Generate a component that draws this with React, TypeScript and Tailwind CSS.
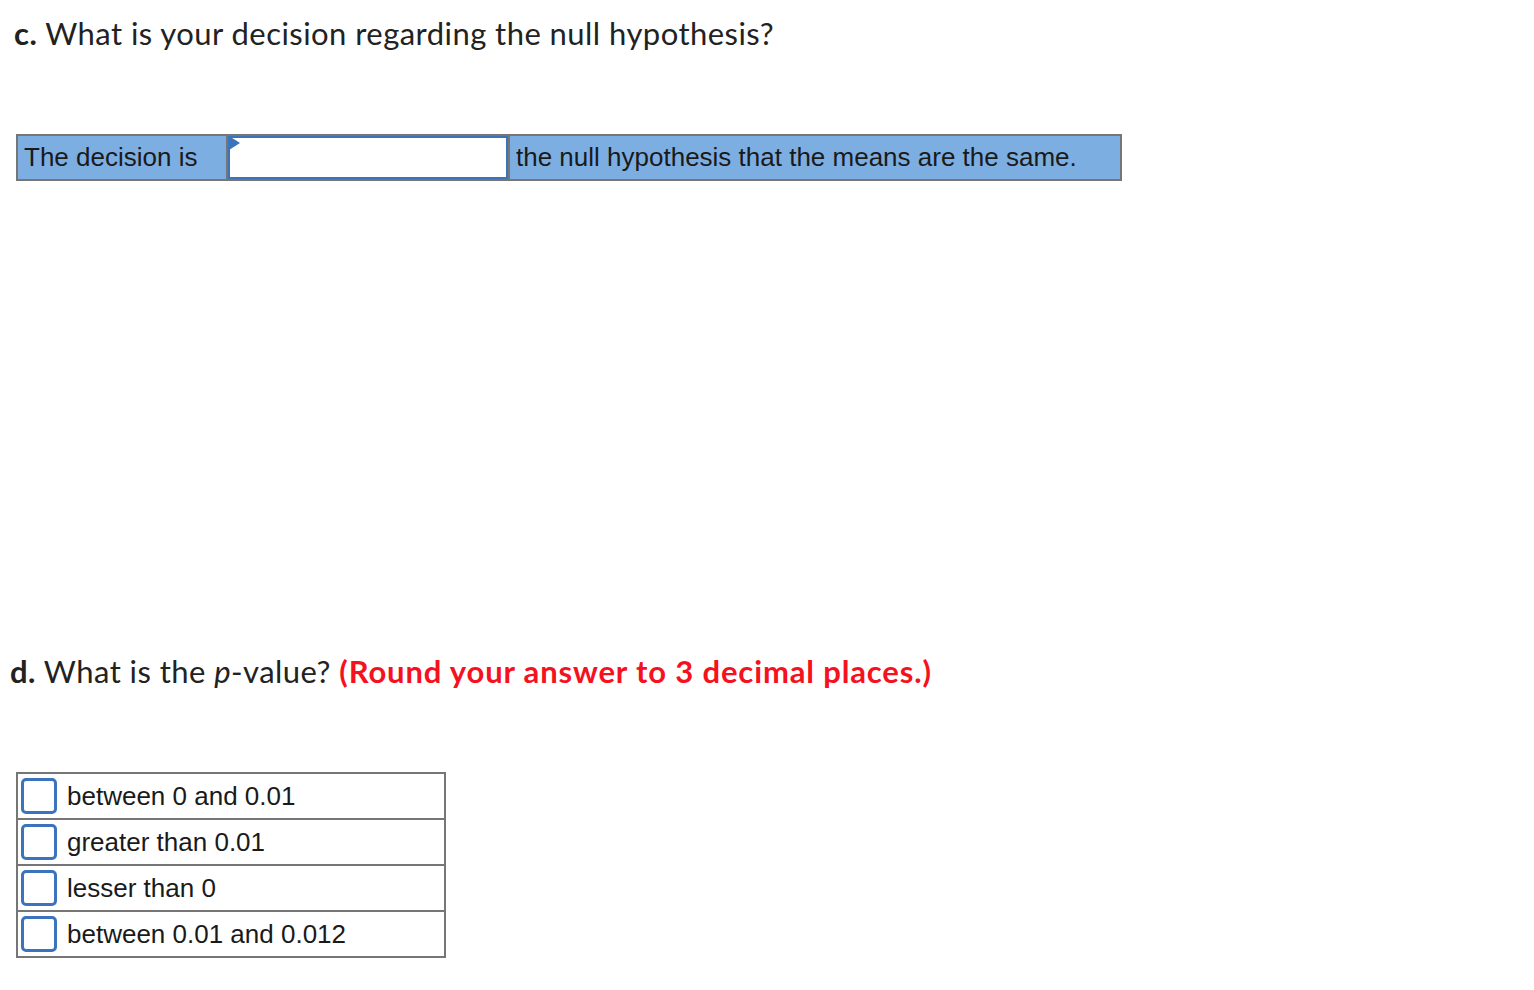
const choices = [
  "between 0 and 0.01",
  "greater than 0.01",
  "lesser than 0",
  "between 0.01 and 0.012",
];

const heading = "font-['Lato','Open_Sans',sans-serif] text-[31px] leading-[40px] tracking-[0.45px] text-[#222]";
const cellText = "font-['Liberation_Sans',Arial,sans-serif] text-[26px] text-[#1a1a1a]";

export default function App() {
  return (
    <div className="min-h-screen bg-white pt-[13px]">
      <h2 className={`${heading} pl-[14px]`}>
        <span className="font-bold">c.</span> What is your decision regarding the null hypothesis?
      </h2>

      {/* decision sentence with the dropdown blank */}
      <div className="ml-4 mt-[81px] flex h-[47px] w-[1106px] border-2 border-[#767676] bg-[#7daee2]">
        <div className={`${cellText} flex w-[208px] items-center pl-[6px]`}>The decision is</div>
        <div className="relative w-[282px] border-l-2 border-[#767676]">
          <div className="h-full w-full border-2 border-[#3b74bb] bg-white" />
          <svg className="absolute left-[1px] top-0" width="11" height="14" viewBox="0 0 11 14">
            <path d="M0 0 L11 7 L0 14 Z" fill="#3b74bb" />
          </svg>
        </div>
        <div className={`${cellText} flex flex-1 items-center border-l-2 border-[#767676] pl-[6px]`}>
          the null hypothesis that the means are the same.
        </div>
      </div>

      <h2 className={`${heading} mt-[470px] pl-[10px]`}>
        <span className="font-bold">d.</span> What is the <i>p</i>-value?{" "}
        <span className="font-bold tracking-[0.85px] text-[#f5111d]">(Round your answer to 3 decimal places.)</span>
      </h2>

      {/* answer choices */}
      <div className="ml-4 mt-[81px] w-[430px] border-2 border-[#767676]">
        {choices.map((c, i) => (
          <div
            key={c}
            className={`flex items-center gap-[10px] pl-[3px] ${i > 0 ? "h-[46px] border-t-2 border-[#767676]" : "h-[44px]"}`}
          >
            <span className="box-border h-[36px] w-[36px] rounded-[5px] border-[3px] border-[#3b74bb] bg-white" />
            <span className={cellText}>{c}</span>
          </div>
        ))}
      </div>
    </div>
  );
}
